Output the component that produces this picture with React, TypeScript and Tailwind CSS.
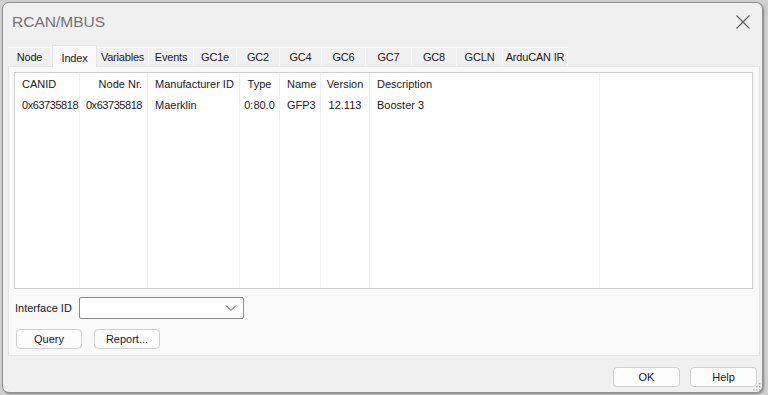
import React from "react";

const tabs: { label: string; w: number }[] = [
  { label: "Node", w: 44 },
  { label: "Index", w: 45 },
  { label: "Variables", w: 52 },
  { label: "Events", w: 45 },
  { label: "GC1e", w: 43 },
  { label: "GC2", w: 43 },
  { label: "GC4", w: 42 },
  { label: "GC6", w: 44 },
  { label: "GC7", w: 46 },
  { label: "GC8", w: 45 },
  { label: "GCLN", w: 46 },
  { label: "ArduCAN IR", w: 65 },
];

type Col = { head: string; val: string; w: number; align: "left" | "right" | "center" };
const cols: Col[] = [
  { head: "CANID", val: "0x63735818", w: 65, align: "left" },
  { head: "Node Nr.", val: "0x63735818", w: 68, align: "right" },
  { head: "Manufacturer ID", val: "Maerklin", w: 92, align: "left" },
  { head: "Type", val: "0:80.0", w: 40, align: "center" },
  { head: "Name", val: "GFP3", w: 41, align: "left" },
  { head: "Version", val: "12.113", w: 49, align: "center" },
  { head: "Description", val: "Booster 3", w: 230, align: "left" },
];

const alignCls = {
  left: "justify-start pl-[7px]",
  right: "justify-end pr-[5px]",
  center: "justify-center",
};

export default function App() {
  return (
    <div
      className="w-[768px] h-[395px] bg-[#cfcfcf] pt-[2px] pl-[2px] pr-[5px] pb-[2px] text-[11px] text-[#1a1a1a]"
      style={{ fontFamily: '"Liberation Sans", Arial, sans-serif' }}
    >
      <div className="relative h-full flex flex-col rounded-[7px] border border-[#8f8f8f] bg-[#f0f0f0] overflow-hidden shadow-[1px_1px_2px_rgba(0,0,0,0.35)]">
        {/* Title bar */}
        <div className="h-[41px] flex items-center justify-between pl-[9px] pr-[10px] shrink-0">
          <span className="text-[15.5px] text-[#747474] leading-none -mt-[3px]">RCAN/MBUS</span>
          <svg width="16" height="16" viewBox="0 0 16 16" className="-mt-[4px] mr-[1px]">
            <path d="M1.5 1.5 L14.5 14.5 M14.5 1.5 L1.5 14.5" stroke="#5c5c5c" strokeWidth="1.1" fill="none" />
          </svg>
        </div>

        {/* Tab strip */}
        <div className="h-[22px] flex items-end pl-[5px] shrink-0 tracking-[-0.2px]">
          {tabs.map((t, i) =>
            i === 1 ? (
              <div
                key={t.label}
                style={{ width: t.w }}
                className="h-[22px] flex items-start justify-center pt-[4px] bg-[#f9f9f9] border-x border-t border-[#e4e4e4] relative z-10 -mb-[1px]"
              >
                {t.label}
              </div>
            ) : (
              <div
                key={t.label}
                style={{ width: t.w }}
                className="h-[19px] flex items-center justify-center bg-[#f0f0f0] border-r border-t border-[#f8f8f8]"
              >
                {t.label}
              </div>
            )
          )}
        </div>

        {/* Tab page */}
        <div className="h-[290px] ml-[5px] mr-[2px] bg-[#f9f9f9] border border-[#e4e4e4] flex flex-col pl-[5px] pr-[6px] pt-[5px] shrink-0">
          {/* List view */}
          <div className="h-[217px] bg-white border border-[#cfcfcf] flex">
            {cols.map((c) => (
              <div key={c.head} style={{ width: c.w }} className="h-full border-r border-[#eeeeee] shrink-0">
                <div className={`h-[22px] flex items-center whitespace-nowrap ${alignCls[c.align]}`}>{c.head}</div>
                <div
                  className={`h-[20px] flex items-center whitespace-nowrap ${alignCls[c.align]} ${
                    c.val.startsWith("0x") ? "tracking-[-0.45px]" : ""
                  }`}
                >
                  {c.val}
                </div>
              </div>
            ))}
            <div className="flex-1" />
          </div>

          {/* Interface ID row */}
          <div className="mt-[8px] h-[22px] flex items-center">
            <span className="ml-[1px] w-[64px]">Interface ID</span>
            <div className="w-[165px] h-[22px] bg-white border border-[#8c8c8c] rounded-[2px] flex items-center justify-end pr-[6px]">
              <svg width="12" height="8" viewBox="0 0 12 8">
                <path d="M1 1.5 L6 6.5 L11 1.5" stroke="#555" strokeWidth="1" fill="none" />
              </svg>
            </div>
          </div>

          {/* Buttons row */}
          <div className="mt-[10px] flex gap-[12px] pl-[2px]">
            <button className="w-[66px] h-[20px] bg-[#fdfdfd] border border-[#d0d0d0] rounded-[4px] flex items-center justify-center">
              Query
            </button>
            <button className="w-[66px] h-[20px] bg-[#fdfdfd] border border-[#d0d0d0] rounded-[4px] flex items-center justify-center">
              Report...
            </button>
          </div>
        </div>

        {/* Bottom buttons */}
        <div className="flex-1 flex items-start justify-end pt-[11px] pr-[5px] gap-[10px]">
          <button className="w-[67px] h-[20px] bg-[#fdfdfd] border border-[#d0d0d0] rounded-[4px] flex items-center justify-center">
            OK
          </button>
          <button className="w-[67px] h-[20px] bg-[#fdfdfd] border border-[#d0d0d0] rounded-[4px] flex items-center justify-center">
            Help
          </button>
        </div>

        {/* Resize grip */}
        <svg width="8" height="8" viewBox="0 0 8 8" className="absolute right-[1px] bottom-[1px]">
          <rect x="6" y="0" width="1.5" height="1.5" fill="#b5b5b5" />
          <rect x="3" y="3" width="1.5" height="1.5" fill="#b5b5b5" />
          <rect x="6" y="3" width="1.5" height="1.5" fill="#b5b5b5" />
          <rect x="0" y="6" width="1.5" height="1.5" fill="#b5b5b5" />
          <rect x="3" y="6" width="1.5" height="1.5" fill="#b5b5b5" />
          <rect x="6" y="6" width="1.5" height="1.5" fill="#b5b5b5" />
        </svg>
      </div>
    </div>
  );
}
